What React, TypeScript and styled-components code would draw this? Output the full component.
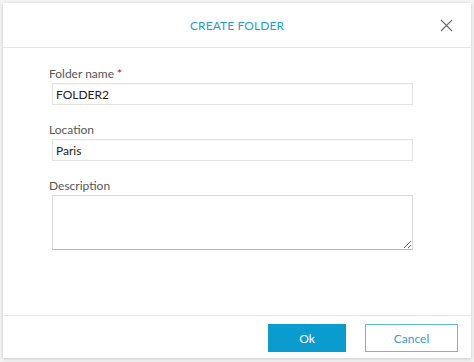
import React, {useState} from 'react';
import styled, {createGlobalStyle} from 'styled-components'

const GlobalStyle = createGlobalStyle`
  html, body {
    margin: 0;
    padding: 0;
    background: #f4f4f4;
    font-family: Lato, "Noto Sans", sans-serif;
  }
`

const Page = styled.div`
  width: 474px;
  height: 362px;
  box-sizing: border-box;
  padding: 3px;
  overflow: hidden;
`

const Dialog = styled.div`
  width: 468px;
  height: 355px;
  background: #fff;
  display: flex;
  flex-direction: column;
  box-shadow: 0 1px 4px rgba(0, 0, 0, 0.18);
`

const Header = styled.div`
  height: 44px;
  flex-shrink: 0;
  display: grid;
  grid-template-columns: 1fr auto 1fr;
  align-items: center;
  border-bottom: 1px solid #e6e6e6;
`

const Title = styled.h1`
  grid-column: 2;
  margin: 0;
  font-size: 12px;
  font-weight: 400;
  color: #1d9fcf;
  letter-spacing: 0.1px;
`

const CloseButton = styled.button`
  grid-column: 3;
  justify-self: end;
  margin-right: 17px;
  width: 16px;
  height: 16px;
  padding: 0;
  border: none;
  background: none;
  display: flex;
  align-items: center;
  justify-content: center;
  cursor: pointer;
`

const Body = styled.form`
  flex: 1;
  padding: 18px 58px 0 46px;
  display: flex;
  flex-direction: column;
`

const Field = styled.div`
  display: flex;
  flex-direction: column;
  margin-bottom: 17px;
`

const Label = styled.label`
  font-size: 12px;
  line-height: 16px;
  color: #555;
  margin-bottom: 1px;

  & span {
    color: #d0021b;
    margin-left: 3px;
  }
`

const Input = styled.input`
  margin-left: 3px;
  height: 22px;
  box-sizing: border-box;
  border: 1px solid #e3e3e3;
  box-shadow: inset 0 1px 1px rgba(0, 0, 0, 0.04);
  padding: 0 3px;
  font-family: Lato, "Noto Sans", sans-serif;
  font-size: 12px;
  color: #222;

  &:focus {
    outline: none;
  }
`

const TextArea = styled.textarea`
  margin-left: 3px;
  height: 55px;
  box-sizing: border-box;
  border: 1px solid #d9d9d9;
  border-bottom-color: #b9b9b9;
  padding: 3px;
  font-family: Lato, "Noto Sans", sans-serif;
  font-size: 12px;
  color: #222;

  &:focus {
    outline: none;
  }
`

const Footer = styled.div`
  flex-shrink: 0;
  border-top: 1px solid #e6e6e6;
  padding: 8px 13px 6px 0;
  display: flex;
  justify-content: flex-end;
  gap: 19px;
`

const Button = styled.button<{$primary?: boolean; $width: number}>`
  width: ${p => p.$width}px;
  height: 28px;
  box-sizing: border-box;
  border: 1px solid ${p => p.$primary ? '#0a9bcf' : '#62bcdb'};
  background: ${p => p.$primary ? '#0a9bcf' : '#fff'};
  color: ${p => p.$primary ? '#fff' : '#3a9cc6'};
  font-family: Lato, "Noto Sans", sans-serif;
  font-size: 12px;
  cursor: pointer;
`

function App() {
    const [name, setName] = useState("FOLDER2")
    const [location, setLocation] = useState("Paris")
    const [description, setDescription] = useState("")

    return (
        <>
            <GlobalStyle/>
            <Page>
                <Dialog>
                    <Header>
                        <Title>CREATE FOLDER</Title>
                        <CloseButton type="button" aria-label="Close">
                            <svg width="13" height="13" viewBox="0 0 13 13">
                                <path d="M1 1 L12 12 M12 1 L1 12" stroke="#6b6b6b" strokeWidth="1.1" fill="none"/>
                            </svg>
                        </CloseButton>
                    </Header>
                    <Body onSubmit={e => e.preventDefault()}>
                        <Field>
                            <Label>Folder name<span>*</span></Label>
                            <Input value={name} onChange={e => setName(e.target.value)}/>
                        </Field>
                        <Field>
                            <Label>Location</Label>
                            <Input value={location} onChange={e => setLocation(e.target.value)}/>
                        </Field>
                        <Field>
                            <Label>Description</Label>
                            <TextArea value={description} onChange={e => setDescription(e.target.value)}/>
                        </Field>
                    </Body>
                    <Footer>
                        <Button $primary $width={78}>Ok</Button>
                        <Button $width={93}>Cancel</Button>
                    </Footer>
                </Dialog>
            </Page>
        </>
    );
}

export default App;
